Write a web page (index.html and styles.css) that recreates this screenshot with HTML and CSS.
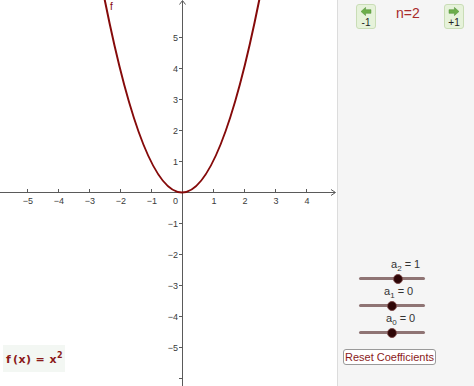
FILE: index.html
```html
<!DOCTYPE html>
<html>
<head>
<meta charset="utf-8">
<link rel="stylesheet" href="styles.css">
</head>
<body>
<div class="app">
  <div class="graphics">
    <svg class="plot" width="337" height="386" viewBox="0 0 337 386">
      <g class="axes" stroke="#5a5a5a" stroke-width="1" fill="none">
        <line x1="0" y1="192.5" x2="335" y2="192.5"/>
        <line x1="182.5" y1="386" x2="182.5" y2="1"/>
        <polyline points="331,189.5 335.5,192.5 331,195.5"/>
        <polyline points="179.5,4.5 182.5,0.5 185.5,4.5"/>
        <!-- x ticks -->
        <line x1="27.5" y1="189" x2="27.5" y2="193"/>
        <line x1="58.5" y1="189" x2="58.5" y2="193"/>
        <line x1="89.5" y1="189" x2="89.5" y2="193"/>
        <line x1="120.5" y1="189" x2="120.5" y2="193"/>
        <line x1="151.5" y1="189" x2="151.5" y2="193"/>
        <line x1="213.5" y1="189" x2="213.5" y2="193"/>
        <line x1="244.5" y1="189" x2="244.5" y2="193"/>
        <line x1="275.5" y1="189" x2="275.5" y2="193"/>
        <line x1="306.5" y1="189" x2="306.5" y2="193"/>
        <!-- y ticks -->
        <line x1="179" y1="37.5" x2="183" y2="37.5"/>
        <line x1="179" y1="68.5" x2="183" y2="68.5"/>
        <line x1="179" y1="99.5" x2="183" y2="99.5"/>
        <line x1="179" y1="130.5" x2="183" y2="130.5"/>
        <line x1="179" y1="161.5" x2="183" y2="161.5"/>
        <line x1="179" y1="223.5" x2="183" y2="223.5"/>
        <line x1="179" y1="254.5" x2="183" y2="254.5"/>
        <line x1="179" y1="285.5" x2="183" y2="285.5"/>
        <line x1="179" y1="316.5" x2="183" y2="316.5"/>
        <line x1="179" y1="347.5" x2="183" y2="347.5"/>
        <line x1="179" y1="378.5" x2="183" y2="378.5"/>
      </g>
      <g class="ticklabels">
        <text x="28" y="204" text-anchor="middle">−5</text>
        <text x="59" y="204" text-anchor="middle">−4</text>
        <text x="90" y="204" text-anchor="middle">−3</text>
        <text x="121" y="204" text-anchor="middle">−2</text>
        <text x="152" y="204" text-anchor="middle">−1</text>
        <text x="178" y="204" text-anchor="end">0</text>
        <text x="214" y="204" text-anchor="middle">1</text>
        <text x="245" y="204" text-anchor="middle">2</text>
        <text x="276" y="204" text-anchor="middle">3</text>
        <text x="307" y="204" text-anchor="middle">4</text>
        <text x="178" y="40.5" text-anchor="end">5</text>
        <text x="178" y="71.5" text-anchor="end">4</text>
        <text x="178" y="102.5" text-anchor="end">3</text>
        <text x="178" y="133.5" text-anchor="end">2</text>
        <text x="178" y="164.5" text-anchor="end">1</text>
        <text x="178" y="226.5" text-anchor="end">−1</text>
        <text x="178" y="257.5" text-anchor="end">−2</text>
        <text x="178" y="288.5" text-anchor="end">−3</text>
        <text x="178" y="319.5" text-anchor="end">−4</text>
        <text x="178" y="350.5" text-anchor="end">−5</text>
      </g>
      <path class="curve" d="M104.5,-1.25 Q182,386.25 259.5,-1.25"/>
      <text class="fname" x="110" y="10">f</text>
    </svg>
    <div class="formula">f<span class="sp"> </span>(x) <span class="eq">=</span> x<sup>2</sup></div>
  </div>
  <div class="panel">
    <div class="toprow">
      <button class="stepbtn">
        <svg width="12" height="10" viewBox="0 0 12 10"><path d="M0.5,5 L5.5,0.5 L5.5,3 L11.5,3 L11.5,7 L5.5,7 L5.5,9.5 Z" fill="#6cae4a" stroke="#4f8f34" stroke-width="0.6"/></svg>
        <span>-1</span>
      </button>
      <div class="ncount">n=2</div>
      <button class="stepbtn">
        <svg width="12" height="10" viewBox="0 0 12 10"><path d="M11.5,5 L6.5,0.5 L6.5,3 L0.5,3 L0.5,7 L6.5,7 L6.5,9.5 Z" fill="#6cae4a" stroke="#4f8f34" stroke-width="0.6"/></svg>
        <span>+1</span>
      </button>
    </div>
    <div class="sliders">
      <div class="slider">
        <div class="slabel" style="padding-left: 32px">a<sub>2</sub> = 1</div>
        <div class="track"><div class="line"></div><div class="knob" style="left: 39px"></div></div>
      </div>
      <div class="slider">
        <div class="slabel" style="padding-left: 25px">a<sub>1</sub> = 0</div>
        <div class="track"><div class="line"></div><div class="knob" style="left: 32.5px"></div></div>
      </div>
      <div class="slider">
        <div class="slabel" style="padding-left: 27px">a<sub>0</sub> = 0</div>
        <div class="track"><div class="line"></div><div class="knob" style="left: 32.5px"></div></div>
      </div>
    </div>
    <button class="reset">Reset Coefficients</button>
  </div>
</div>
</body>
</html>
```

FILE: styles.css
```css
html, body {
  margin: 0;
  padding: 0;
  width: 474px;
  height: 386px;
  overflow: hidden;
  background: #ffffff;
  font-family: "Liberation Sans", Arial, sans-serif;
}

.app {
  display: flex;
  width: 474px;
  height: 386px;
}

.graphics {
  position: relative;
  width: 337px;
  height: 386px;
  background: #ffffff;
  flex: none;
}

.plot {
  display: block;
}

.ticklabels text {
  font-family: "Liberation Sans", Arial, sans-serif;
  font-size: 9px;
  fill: #3a3a3a;
}

.curve {
  fill: none;
  stroke: #850a0a;
  stroke-width: 2;
}

.fname {
  font-family: "Liberation Sans", Arial, sans-serif;
  font-size: 10px;
  fill: #850a0a;
}

.formula {
  position: absolute;
  left: 3px;
  top: 345px;
  width: 59px;
  height: 27px;
  padding-left: 3px;
  background: #f3f7f3;
  color: #8b1a1a;
  font-family: "DejaVu Sans", sans-serif;
  font-weight: bold;
  font-size: 11px;
  letter-spacing: 0.4px;
  line-height: 29px;
  white-space: nowrap;
}

.formula sup {
  font-size: 8px;
  vertical-align: 5px;
  line-height: 0;
}

.formula .sp {
  font-size: 4px;
}

.panel {
  flex: 1;
  background: #f5f5f5;
  border-left: 1px solid #dcdcdc;
  display: flex;
  flex-direction: column;
}

.toprow {
  display: flex;
  align-items: flex-start;
  padding: 4px 10px 0 18px;
}

.stepbtn {
  width: 20px;
  height: 25px;
  padding: 2px 0 0 0;
  margin: 0;
  border: 1px solid #c9ddb6;
  border-radius: 3px;
  background: #e6f2da;
  display: flex;
  flex-direction: column;
  align-items: center;
  gap: 1px;
  font-family: "Liberation Sans", Arial, sans-serif;
  font-size: 10px;
  color: #222222;
  line-height: 11px;
}

.stepbtn svg {
  display: block;
}

.ncount {
  flex: 1;
  padding-left: 20px;
  padding-top: 1px;
  font-size: 14px;
  line-height: 17px;
  color: #a82a2a;
}

.sliders {
  margin-top: 229px;
  margin-left: 21px;
  width: 66px;
  display: flex;
  flex-direction: column;
}

.slider {
  display: flex;
  flex-direction: column;
}

.slabel {
  height: 13px;
  font-size: 11px;
  line-height: 13px;
  color: #333333;
  white-space: nowrap;
}

.slabel sub {
  font-size: 8px;
  line-height: 0;
  vertical-align: -3px;
}

.track {
  position: relative;
  height: 14px;
  display: flex;
  align-items: center;
}

.line {
  width: 100%;
  height: 3px;
  border-radius: 2px;
  background: #8f7474;
}

.knob {
  position: absolute;
  top: 3px;
  width: 8px;
  height: 8px;
  margin-left: -5px;
  border-radius: 50%;
  background: #2e0606;
  border: 1px solid #7c4a4a;
}

.reset {
  align-self: flex-start;
  margin: 10px 0 0 5px;
  width: 93px;
  height: 16px;
  padding: 0;
  border: 1px solid #9a9a9a;
  border-radius: 3px;
  background: #ffffff;
  font-family: "Liberation Sans", Arial, sans-serif;
  font-size: 11px;
  line-height: 14px;
  color: #8b1a1a;
  white-space: nowrap;
}
```
